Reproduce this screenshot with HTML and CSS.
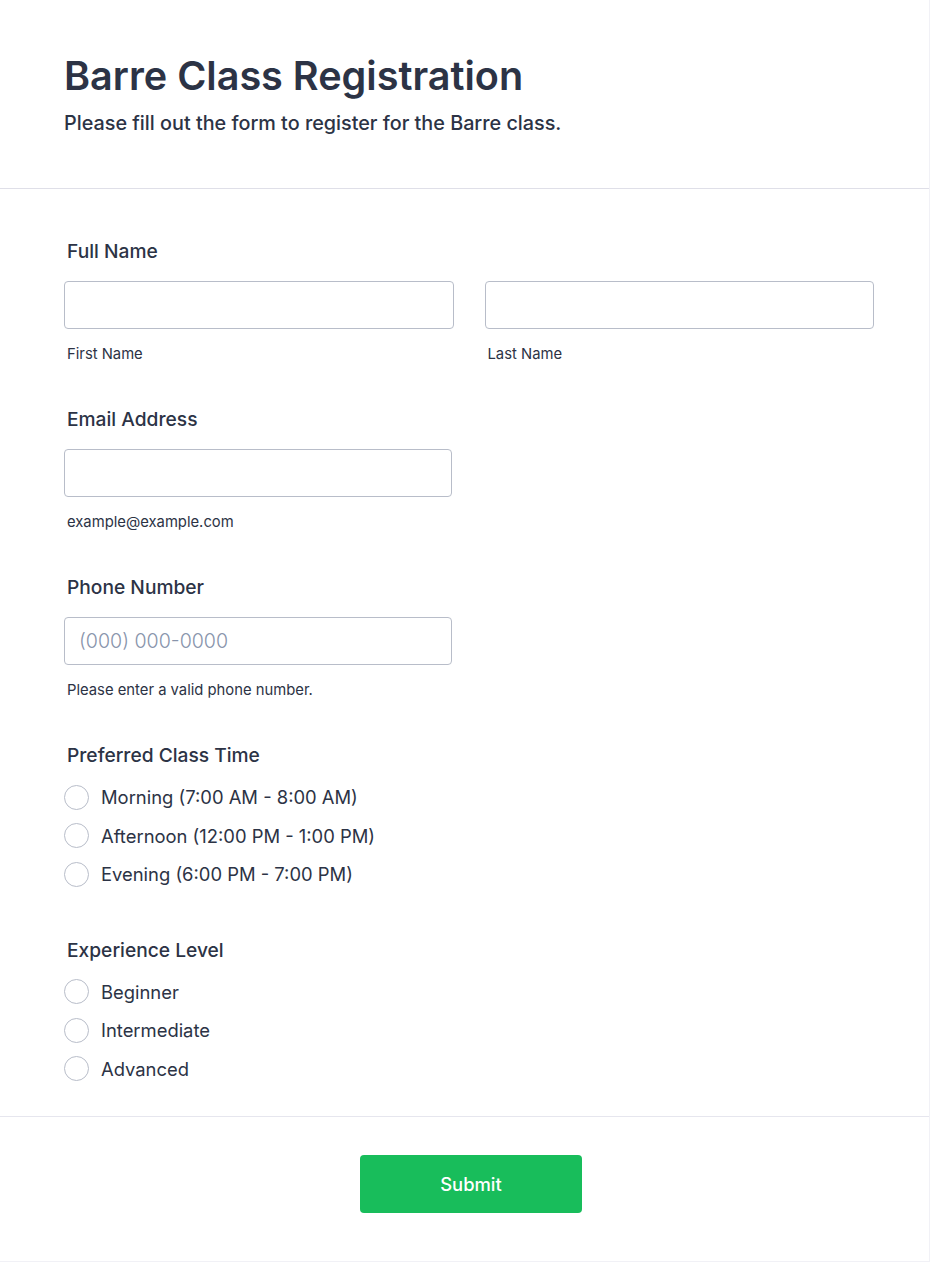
FILE: index.html
```html
<!DOCTYPE html>
<html lang="en">
<head>
<meta charset="utf-8">
<title>Barre Class Registration</title>
<link rel="stylesheet" href="styles.css">
</head>
<body>
<form class="form">
  <header class="form-header">
    <h1 class="form-title">Barre Class Registration</h1>
    <p class="form-subtitle">Please fill out the form to register for the Barre class.</p>
  </header>
  <div class="form-body">
    <div class="field">
      <label class="field-label">Full Name</label>
      <div class="name-row">
        <div class="name-col">
          <input class="text-input" type="text">
          <span class="sublabel">First Name</span>
        </div>
        <div class="name-col">
          <input class="text-input" type="text">
          <span class="sublabel">Last Name</span>
        </div>
      </div>
    </div>
    <div class="field">
      <label class="field-label">Email Address</label>
      <div class="half">
        <input class="text-input" type="email">
        <span class="sublabel">example@example.com</span>
      </div>
    </div>
    <div class="field">
      <label class="field-label">Phone Number</label>
      <div class="half">
        <input class="text-input" type="tel" placeholder="(000) 000-0000">
        <span class="sublabel">Please enter a valid phone number.</span>
      </div>
    </div>
    <div class="field">
      <label class="field-label">Preferred Class Time</label>
      <div class="radio-list">
        <label class="radio-row"><span class="radio-circle"></span><span class="radio-text">Morning (7:00 AM - 8:00 AM)</span></label>
        <label class="radio-row"><span class="radio-circle"></span><span class="radio-text">Afternoon (12:00 PM - 1:00 PM)</span></label>
        <label class="radio-row"><span class="radio-circle"></span><span class="radio-text">Evening (6:00 PM - 7:00 PM)</span></label>
      </div>
    </div>
    <div class="field">
      <label class="field-label">Experience Level</label>
      <div class="radio-list">
        <label class="radio-row"><span class="radio-circle"></span><span class="radio-text">Beginner</span></label>
        <label class="radio-row"><span class="radio-circle"></span><span class="radio-text">Intermediate</span></label>
        <label class="radio-row"><span class="radio-circle"></span><span class="radio-text">Advanced</span></label>
      </div>
    </div>
  </div>
  <footer class="form-footer">
    <button class="submit-btn" type="button">Submit</button>
  </footer>
</form>
</body>
</html>
```
FILE: styles.css
```css
* { box-sizing: border-box; }
html, body { margin: 0; padding: 0; background: #ffffff; }
body {
  font-family: Inter, "Noto Sans", "Liberation Sans", sans-serif;
  color: #2c3345;
}
.form {
  width: 930px;
  border-right: 1px solid #f1f1f6;
  border-bottom: 1px solid #f1f1f6;
  background: #fff;
}
.form-header {
  padding: 52px 55px 53px 64px;
  border-bottom: 1px solid #dfdfe8;
}
.form-title {
  margin: 0;
  font-size: 39.6px;
  line-height: 48px;
  font-weight: 600;
  color: #2c3345;
}
.form-subtitle {
  margin: 11px 0 0;
  font-size: 19.8px;
  line-height: 24px;
  font-weight: 500;
}
.form-body {
  padding: 50px 55px 28px 64px;
  display: flex;
  flex-direction: column;
  gap: 44px;
}
.field {
  display: flex;
  flex-direction: column;
}
.field-label {
  font-size: 19.2px;
  line-height: 24px;
  font-weight: 500;
  padding-left: 3px;
  margin-bottom: 18px;
}
.name-row {
  display: grid;
  grid-template-columns: 1fr 1fr;
  gap: 31px;
}
.name-col, .half {
  display: flex;
  flex-direction: column;
}
.half { width: 388px; }
.text-input {
  height: 48px;
  width: 100%;
  border: 1px solid #b8bdc9;
  border-radius: 4px;
  padding: 0 14px;
  font-family: inherit;
  font-size: 19.6px;
  color: #2c3345;
  background: #fff;
  outline: none;
}
.text-input::placeholder {
  color: #8894ab;
  font-weight: 300;
}
.sublabel {
  margin-top: 16px;
  font-size: 14.8px;
  line-height: 18px;
  padding-left: 3px;
  color: #2c3345;
}
.field-label + .radio-list { margin-top: -7px; }
.radio-list {
  display: flex;
  flex-direction: column;
}
.radio-row {
  display: flex;
  align-items: center;
  height: 38.5px;
  gap: 12px;
}
.radio-circle {
  width: 25px;
  height: 25px;
  border: 1px solid #b8bdc9;
  border-radius: 50%;
  flex: none;
  background: #fff;
}
.radio-text {
  font-size: 18.4px;
  line-height: 24px;
}
.form-footer {
  border-top: 1px solid #e6e6ee;
  padding: 38px 51px 48px 64px;
  display: flex;
  justify-content: center;
}
.submit-btn {
  width: 222px;
  height: 58px;
  border: none;
  border-radius: 4px;
  background: #18bd5b;
  color: #fff;
  font-family: inherit;
  font-size: 18.4px;
  font-weight: 500;
  cursor: pointer;
}
```
